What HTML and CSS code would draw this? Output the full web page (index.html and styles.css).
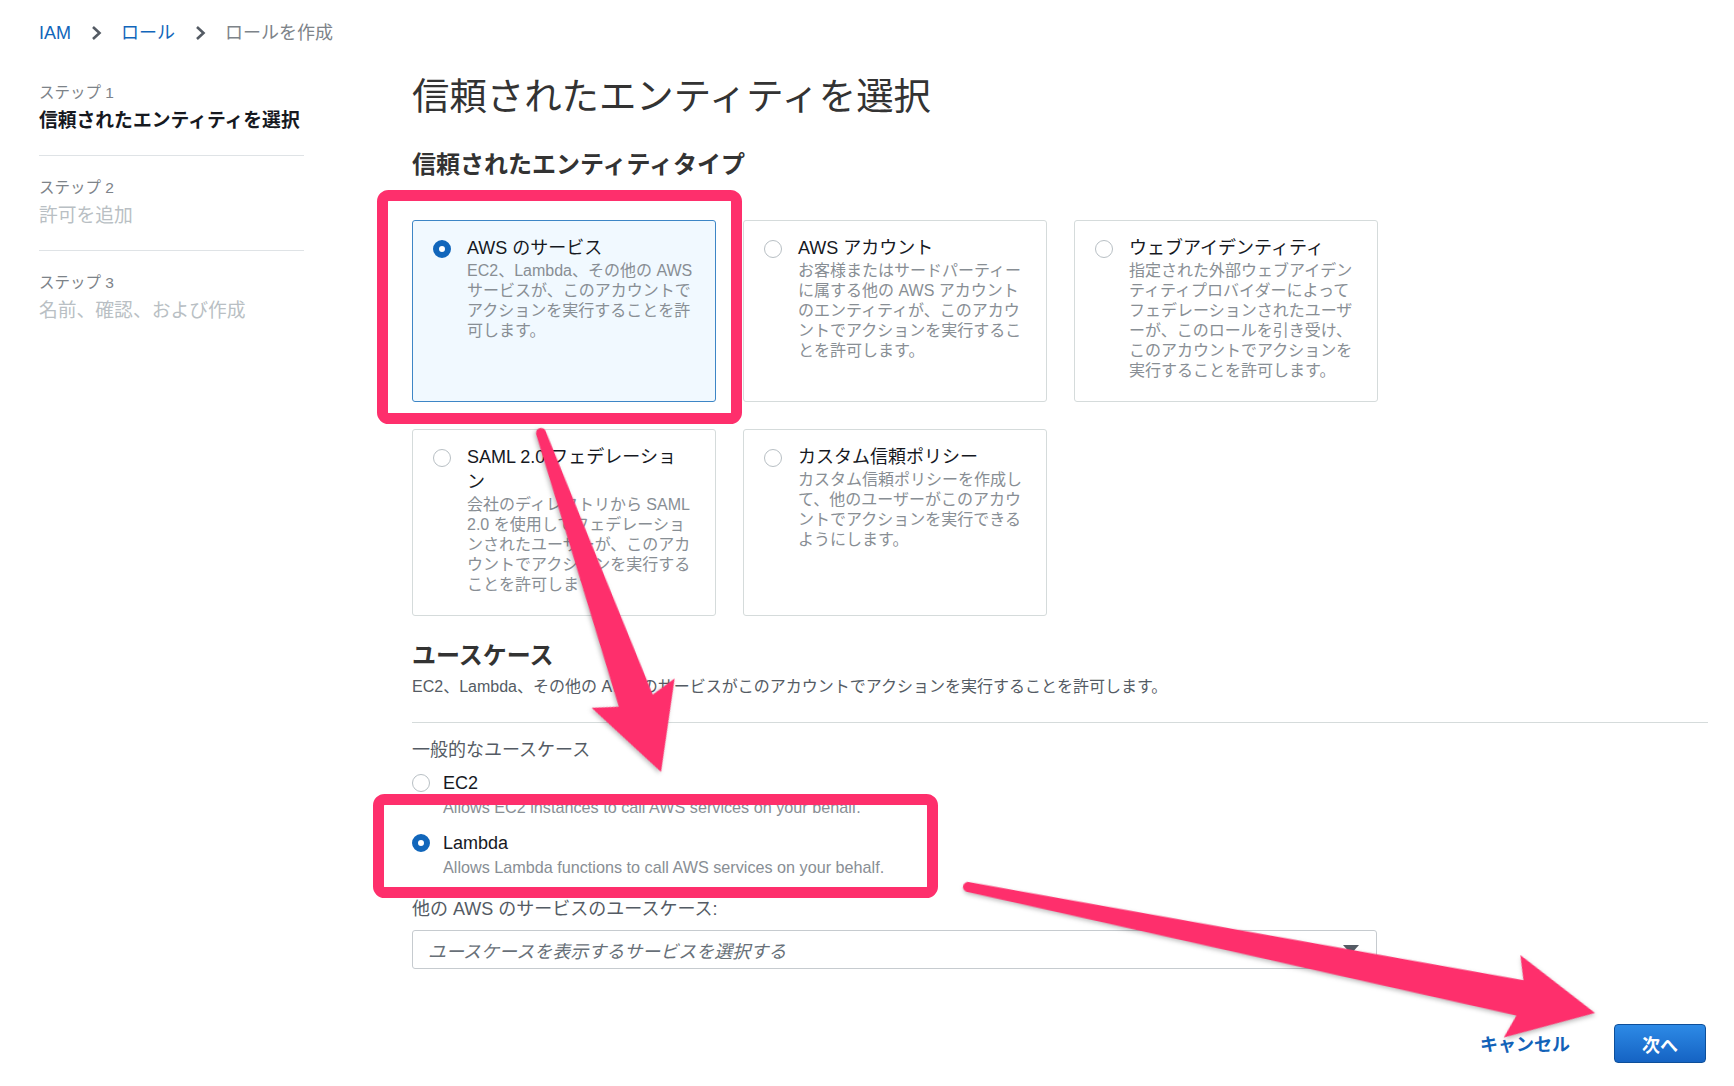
FILE: index.html
```html
<!DOCTYPE html>
<html lang="ja">
<head>
    <meta charset="UTF-8">
    <meta name="viewport" content="width=device-width, initial-scale=1.0">
    <title>ロールを作成 | IAM</title>
    <link rel="stylesheet" href="styles.css">
</head>
<body>
<div class="page">
    <!--Breadcrumb-->
    <nav class="breadcrumb">
        <a href="#">IAM</a>
        <svg class="crumb-sep" width="12" height="16" viewBox="0 0 12 16"><path d="M3 2 L9.5 8 L3 14" /></svg>
        <a href="#">ロール</a>
        <svg class="crumb-sep" width="12" height="16" viewBox="0 0 12 16"><path d="M3 2 L9.5 8 L3 14" /></svg>
        <span class="crumb-current">ロールを作成</span>
    </nav>

    <div class="layout">
        <!--Wizard steps-->
        <ol class="steps">
            <li class="step current">
                <div class="step-label">ステップ 1</div>
                <div class="step-name">信頼されたエンティティを選択</div>
            </li>
            <li class="step">
                <div class="step-label">ステップ 2</div>
                <div class="step-name">許可を追加</div>
            </li>
            <li class="step">
                <div class="step-label">ステップ 3</div>
                <div class="step-name">名前、確認、および作成</div>
            </li>
        </ol>

        <!--Main form-->
        <main class="content">
            <h1>信頼されたエンティティを選択</h1>

            <h2 class="section-title">信頼されたエンティティタイプ</h2>
            <div class="entity-grid">
                <label class="entity-card selected">
                    <input type="radio" name="entity" checked>
                    <span class="entity-text">
                        <span class="entity-title">AWS のサービス</span>
                        <span class="entity-desc">EC2、Lambda、その他の AWS<br>サービスが、このアカウントで<br>アクションを実行することを許<br>可します。</span>
                    </span>
                </label>
                <label class="entity-card">
                    <input type="radio" name="entity">
                    <span class="entity-text">
                        <span class="entity-title">AWS アカウント</span>
                        <span class="entity-desc">お客様またはサードパーティー<br>に属する他の AWS アカウント<br>のエンティティが、このアカウ<br>ントでアクションを実行するこ<br>とを許可します。</span>
                    </span>
                </label>
                <label class="entity-card">
                    <input type="radio" name="entity">
                    <span class="entity-text">
                        <span class="entity-title">ウェブアイデンティティ</span>
                        <span class="entity-desc">指定された外部ウェブアイデン<br>ティティプロバイダーによって<br>フェデレーションされたユーザ<br>ーが、このロールを引き受け、<br>このアカウントでアクションを<br>実行することを許可します。</span>
                    </span>
                </label>
                <label class="entity-card">
                    <input type="radio" name="entity">
                    <span class="entity-text">
                        <span class="entity-title">SAML 2.0 フェデレーショ<br>ン</span>
                        <span class="entity-desc">会社のディレクトリから SAML<br>2.0 を使用してフェデレーショ<br>ンされたユーザーが、このアカ<br>ウントでアクションを実行する<br>ことを許可します。</span>
                    </span>
                </label>
                <label class="entity-card">
                    <input type="radio" name="entity">
                    <span class="entity-text">
                        <span class="entity-title">カスタム信頼ポリシー</span>
                        <span class="entity-desc">カスタム信頼ポリシーを作成し<br>て、他のユーザーがこのアカウ<br>ントでアクションを実行できる<br>ようにします。</span>
                    </span>
                </label>
            </div>

            <!--Use case-->
            <h2 class="section-title usecase-title">ユースケース</h2>
            <p class="usecase-desc">EC2、Lambda、その他の AWS のサービスがこのアカウントでアクションを実行することを許可します。</p>
            <hr class="divider">

            <div class="field-label">一般的なユースケース</div>
            <label class="usecase-option first">
                <input type="radio" name="usecase">
                <span class="option-text">
                    <span class="option-title">EC2</span>
                    <span class="option-desc">Allows EC2 instances to call AWS services on your behalf.</span>
                </span>
            </label>
            <label class="usecase-option">
                <input type="radio" name="usecase" checked>
                <span class="option-text">
                    <span class="option-title">Lambda</span>
                    <span class="option-desc">Allows Lambda functions to call AWS services on your behalf.</span>
                </span>
            </label>

            <div class="field-label other-label">他の AWS のサービスのユースケース:</div>
            <div class="select-box">
                <span class="select-placeholder">ユースケースを表示するサービスを選択する</span>
                <span class="select-caret"></span>
            </div>

            <div class="actions">
                <button class="btn-cancel" type="button">キャンセル</button>
                <button class="btn-primary" type="button">次へ</button>
            </div>
        </main>
    </div>
</div>

<!--Screenshot annotations-->
<svg class="annotations" width="1734" height="1086" viewBox="0 0 1734 1086">
    <rect class="mark-box" x="382.5" y="195.5" width="354" height="223" rx="6" />
    <rect class="mark-box" x="378.5" y="799.5" width="554" height="93" rx="6" />
    <path class="mark-arrow" transform="translate(541 433) rotate(70.5)"
          d="M0 -5 L284 -18 L276 -44 L359.6 0 L276 44 L284 18 L0 5 A5 5 0 0 1 0 -5 Z" />
    <path class="mark-arrow" transform="translate(968 887) rotate(11.36)"
          d="M0 -5 L563 -18 L555 -42 L639.5 0 L555 42 L563 18 L0 5 A5 5 0 0 1 0 -5 Z" />
</svg>
</body>
</html>
```

FILE: styles.css
```css
body {
    margin: 0;
    position: relative;
    font-family: "Liberation Sans", "Noto Sans CJK JP", sans-serif;
    color: #16191f;
    background: #fff;
}
.page {
    padding: 20px 26px 0 39px;
}

/* breadcrumb */
.breadcrumb {
    display: flex;
    align-items: center;
    gap: 19px;
    height: 26px;
    font-size: 18px;
    line-height: 26px;
}
.breadcrumb a {
    color: #1166bb;
    text-decoration: none;
}
.crumb-sep path {
    fill: none;
    stroke: #545b64;
    stroke-width: 2.6;
}
.crumb-current {
    color: #7d8389;
}

.layout {
    display: grid;
    grid-template-columns: 265px 1fr;
    column-gap: 108px;
    margin-top: 29px;
}

/* steps */
.steps {
    list-style: none;
    margin: 0;
    padding: 7px 0 0;
}
.step {
    padding: 21px 0 20px;
    border-bottom: 1px solid #dfe3e6;
}
.step:first-child {
    padding-top: 0;
}
.step:last-child {
    border-bottom: none;
}
.step-label {
    font-size: 15.5px;
    line-height: 22px;
    color: #7d8389;
}
.step-name {
    margin-top: 3px;
    font-size: 18.8px;
    line-height: 28px;
    color: #b9bfc4;
}
.step.current .step-name {
    color: #16191f;
    font-weight: bold;
}

/* main */
.content h1 {
    margin: 0;
    font-size: 37.4px;
    font-weight: normal;
    line-height: 44px;
    color: #333;
}
.section-title {
    margin: 31px 0 0;
    font-size: 24px;
    line-height: 30px;
    font-weight: bold;
    color: #333;
}
.entity-grid {
    display: grid;
    grid-template-columns: repeat(3, 304px);
    column-gap: 27px;
    row-gap: 27px;
    margin-top: 40px;
}
.entity-card {
    display: flex;
    gap: 16px;
    padding: 15px 20px 20px;
    border: 1px solid #d5dbdb;
    border-radius: 3px;
    cursor: pointer;
}
.entity-card.selected {
    background: #f1f9ff;
    border-color: #3d86c6;
}
.entity-text {
    display: flex;
    flex-direction: column;
}
.entity-title {
    font-size: 18px;
    line-height: 25px;
    color: #16191f;
    white-space: nowrap;
}
.entity-desc {
    font-size: 16px;
    line-height: 20px;
    color: #888e94;
    white-space: nowrap;
}

input[type=radio] {
    appearance: none;
    -webkit-appearance: none;
    flex: none;
    box-sizing: border-box;
    width: 18px;
    height: 18px;
    margin: 4px 0 0;
    border: 1px solid #b8bfc4;
    border-radius: 50%;
    background: #fff;
}
input[type=radio]:checked {
    border: 6px solid #1166bb;
}

.usecase-title {
    margin-top: 25px;
}
.usecase-desc {
    margin: 5px 0 0;
    font-size: 16px;
    line-height: 22px;
    color: #545b64;
}
.divider {
    margin: 24px 0 0;
    border: none;
    border-top: 1px solid #d5dbdb;
}
.field-label {
    margin-top: 15px;
    font-size: 18px;
    line-height: 24px;
    color: #545b64;
}
.usecase-option {
    display: flex;
    gap: 13px;
    margin-top: 13px;
}
.usecase-option.first {
    margin-top: 9px;
}
.usecase-option input[type=radio] {
    margin-top: 3px;
}
.option-text {
    display: flex;
    flex-direction: column;
}
.option-title {
    font-size: 18px;
    line-height: 24px;
    color: #16191f;
}
.option-desc {
    margin-top: 1px;
    font-size: 16.2px;
    line-height: 22px;
    color: #888e94;
}
.other-label {
    margin-top: 19px;
}

.select-box {
    box-sizing: border-box;
    display: flex;
    align-items: center;
    justify-content: space-between;
    width: 965px;
    height: 39px;
    margin-top: 9px;
    padding: 0 17px 0 15px;
    border: 1px solid #c6cbcf;
    border-radius: 3px;
}
.select-placeholder {
    font-size: 18px;
    font-style: italic;
    color: #687078;
}
.select-caret {
    width: 0;
    height: 0;
    border-left: 8px solid transparent;
    border-right: 8px solid transparent;
    border-top: 9px solid #545b64;
}

.actions {
    display: flex;
    justify-content: flex-end;
    align-items: center;
    gap: 44px;
    margin-top: 55px;
    padding-right: 2px;
}
.btn-cancel {
    padding: 0 0 2px;
    border: none;
    background: none;
    font-family: inherit;
    font-size: 18px;
    font-weight: bold;
    color: #1262b8;
    cursor: pointer;
}
.btn-primary {
    width: 92px;
    height: 39px;
    border: 1px solid #0d4f9a;
    border-radius: 4px;
    background: linear-gradient(#2d8ae6, #1563c3);
    font-family: inherit;
    font-size: 18px;
    font-weight: bold;
    color: #fff;
    cursor: pointer;
}

/* annotations drawn on top of the screenshot */
.annotations {
    position: absolute;
    top: 0;
    left: 0;
    pointer-events: none;
}
.mark-box {
    fill: none;
    stroke: #fe2f6c;
    stroke-width: 11;
}
.mark-arrow {
    fill: #fe2f6c;
    filter: drop-shadow(1px 2px 2px rgba(0, 0, 0, 0.25));
}
```
